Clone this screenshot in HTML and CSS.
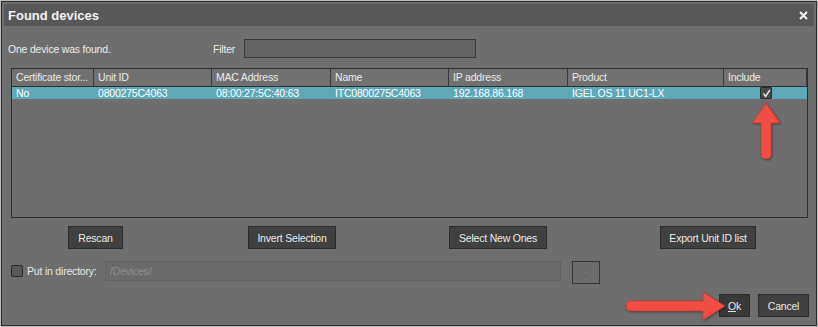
FILE: index.html
```html
<!DOCTYPE html>
<html>
<head>
<meta charset="utf-8">
<link rel="stylesheet" href="styles.css">
</head>
<body>
<div class="dialog">
  <div class="inner">
    <div class="titlebar">
      <span class="title">Found devices</span>
      <svg class="close" width="9" height="9" viewBox="0 0 9 9"><path d="M1 1L8 8M8 1L1 8" stroke="#f2f2f2" stroke-width="2"/></svg>
    </div>
    <div class="top-row">
      <span class="found">One device was found.</span>
      <span class="filter-label">Filter</span>
      <div class="filter-input"></div>
    </div>
    <div class="table">
      <div class="thead">
        <div class="c c1">Certificate stor...</div>
        <div class="c c2">Unit ID</div>
        <div class="c c3">MAC Address</div>
        <div class="c c4">Name</div>
        <div class="c c5">IP address</div>
        <div class="c c6">Product</div>
        <div class="c c7">Include</div>
      </div>
      <div class="trow">
        <div class="c c1">No</div>
        <div class="c c2">0800275C4063</div>
        <div class="c c3">08:00:27:5C:40:63</div>
        <div class="c c4">ITC0800275C4063</div>
        <div class="c c5">192.168.86.168</div>
        <div class="c c6">IGEL OS 11 UC1-LX</div>
        <div class="c c7 inc"><span class="cb checked"><svg width="9" height="9" viewBox="0 0 9 9"><path d="M1.5 4.5L3.6 7.5L7.8 1" stroke="#e6e6e6" stroke-width="1.4" fill="none"/></svg></span></div>
      </div>
    </div>
    <div class="btn-row">
      <div class="btn b-rescan">Rescan</div>
      <div class="btn b-invert">Invert Selection</div>
      <div class="btn b-select">Select New Ones</div>
      <div class="btn b-export">Export Unit ID list</div>
    </div>
    <div class="dir-row">
      <span class="cb plain"></span>
      <span class="dir-label">Put in directory:</span>
      <div class="dir-input">/Devices/</div>
      <div class="dots">...</div>
    </div>
    <div class="ok-row">
      <div class="btn b-ok"><u>O</u>k</div>
      <div class="btn b-cancel">Cancel</div>
    </div>
  </div>
  <svg class="arrow-v" width="40" height="64" viewBox="0 0 40 64">
    <path d="M20 1L34 21L25 21L25 52Q25 57 20 57Q15 57 15 52L15 21L6 21Z" fill="#f04e45" stroke="#c9382f" stroke-width="0.8" />
  </svg>
  <svg class="arrow-h" width="108" height="36" viewBox="0 0 108 36">
    <path d="M102 17L80 3L80 12L8 12Q3 12 3 17Q3 22 8 22L80 22L80 31Z" fill="#f04e45" stroke="#c9382f" stroke-width="0.8"/>
  </svg>
</div>
</body>
</html>
```
FILE: styles.css
```css
* { box-sizing: border-box; }
html, body { margin: 0; padding: 0; background: #6e6e6e; }
body { font-family: "Liberation Sans", Arial, sans-serif; font-size: 10.5px; letter-spacing: -0.2px; color: #ececec; }
.dialog { position: relative; width: 818px; height: 327px; border: 1px solid #b9b9b9; background: #6e6e6e; }
.inner { width: 100%; height: 100%; border: 1px solid #2d2d2d; padding: 2px 2px 0 2px; }
.titlebar { height: 22px; background: #585858; display: flex; align-items: center; justify-content: space-between; padding: 0 6px 0 4px; }
.title { font-weight: bold; font-size: 13px; letter-spacing: 0; color: #f2f2f2; }
.close { display: block; }
.top-row { display: flex; align-items: center; height: 19px; margin-top: 13px; padding-left: 4px; }
.found { width: 205px; }
.filter-label { width: 31px; }
.filter-input { width: 232px; height: 19px; background: #646464; border: 1px solid #3a3a3a; }
.table { margin: 10px 0 0 7px; width: 797px; height: 150px; border: 1px solid #2f2f2f; background: #6e6e6e; }
.thead { display: flex; height: 18px; background: #717171; border-bottom: 1px solid #2f2f2f; }
.thead .c { border-right: 1px solid #3a3a3a; line-height: 17px; }
.trow { display: flex; height: 12px; background: #5ea8b8; color: #ffffff; }
.trow .c { line-height: 12px; border-right: 1px solid transparent; }
.c { padding-left: 4px; white-space: nowrap; overflow: hidden; flex: none; }
.c1 { width: 82px; }
.c2 { width: 118px; }
.c3 { width: 119px; }
.c4 { width: 118px; }
.c5 { width: 119px; }
.c6 { width: 156px; }
.c7 { width: 83px; }
.inc { display: flex; justify-content: center; padding-left: 2px; }
.cb { display: inline-flex; align-items: center; justify-content: center; width: 12px; height: 12px; background: #4a4a4a; border: 1px solid #2a2a2a; border-radius: 1px; }
.cb.plain { background: #585858; border-radius: 2px; width: 12px; height: 12px; }
.btn-row { display: flex; margin-top: 8px; height: 23px; }
.btn { height: 23px; display: flex; align-items: center; justify-content: center; background: #404040; border: 1px solid #2b2b2b; color: #eaeaea; }
.b-rescan { width: 55px; margin-left: 64px; }
.b-invert { width: 88px; margin-left: 125px; }
.b-select { width: 98px; margin-left: 113px; }
.b-export { width: 96px; margin-left: 113px; }
.dir-row { display: flex; align-items: flex-start; margin-top: 12px; height: 22px; padding-left: 7px; }
.dir-row .cb { margin-top: 4px; }
.dir-label { margin-left: 4px; width: 78px; line-height: 20px; color: #e6e6e6; }
.dir-input { width: 456px; height: 20px; line-height: 19px; padding-left: 4px; background: #6a6a6a; border: 1px solid #626262; border-top-color: #5e5e5e; color: #8c8c8c; }
.dots { width: 28px; height: 23px; margin-left: 11px; border: 1px solid #363636; background: #6c6c6c; color: #4a4a4a; font-size: 8px; display: flex; align-items: center; justify-content: center; padding-top: 2px; }
.ok-row { display: flex; justify-content: flex-end; margin-top: 11px; padding-right: 5px; }
.b-ok { width: 31px; background: #383838; }
.b-cancel { width: 51px; margin-left: 8px; }
.arrow-v { position: absolute; left: 745px; top: 101px; filter: drop-shadow(1px 1px 1px rgba(0,0,0,0.35)); }
.arrow-h { position: absolute; left: 622px; top: 288px; filter: drop-shadow(1px 1px 1px rgba(0,0,0,0.35)); }
```
